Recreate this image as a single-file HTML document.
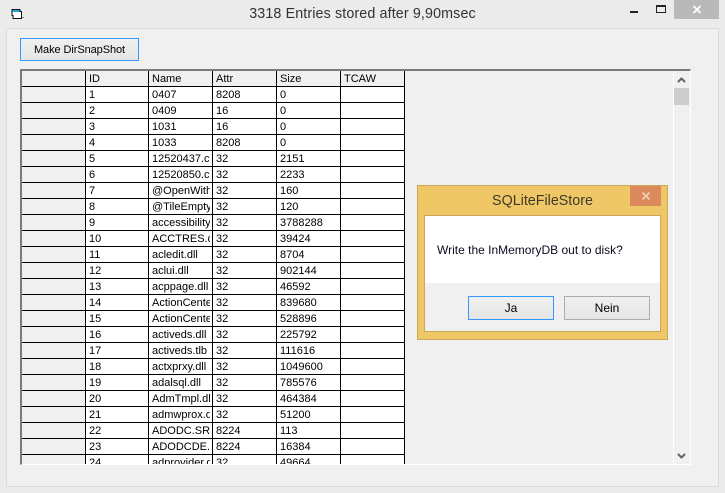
<!DOCTYPE html>
<html><head><meta charset="utf-8"><style>
html,body{margin:0;padding:0}
body{width:725px;height:493px;overflow:hidden;position:relative;background:#ebebeb;font-family:"Liberation Sans",sans-serif;color:#000}
.a{position:absolute;box-sizing:border-box}
table{border-collapse:separate;border-spacing:0;table-layout:fixed;position:absolute;left:22px;top:71px;width:383px;font-size:11px}
td{height:15px;padding:0;border-right:1px solid #000;border-bottom:1px solid #000;overflow:hidden;white-space:nowrap;background:#fff;line-height:15px;box-sizing:content-box}
td div{overflow:hidden;padding-left:3px;margin-right:2px;height:15px;line-height:17px}
td:first-child{background:#f0f0f0}
tr:first-child td{background:#f0f0f0}
.b{background:linear-gradient(#f0f0f0,#e5e5e5);text-align:center;font-size:12px}
</style></head><body>
<div class="a" style="left:6px;top:28px;width:713px;height:459px;background:#f0f0f0;border:1px solid #dcdcdc"></div>
<svg class="a" style="left:10px;top:7px" width="14" height="14" viewBox="0 0 14 14"><path d="M2 2.500h8v2h1.500v7H3v-3H2z" fill="#fff" stroke="#111"/><rect x="2.500" y="3" width="7" height="2" fill="#2ad"/><rect x="12" y="10" width="2" height="1" fill="#888"/></svg>
<div class="a" style="left:200px;top:5px;width:325px;text-align:center;font-size:14.300px;line-height:18px;color:#333;white-space:nowrap;letter-spacing:.12px">3318 Entries stored after 9,90msec</div>
<div class="a" style="left:630px;top:11px;width:8px;height:2px;background:#222"></div>
<div class="a" style="left:656px;top:5px;width:10px;height:8px;border:1px solid #222;border-top-width:2px"></div>
<div class="a" style="left:674px;top:0;width:45px;height:19px;background:#b9b9b9"></div>
<svg class="a" style="left:692px;top:5px" width="10" height="9" viewBox="0 0 10 9"><path d="M1.500 1l7 7M8.500 1l-7 7" stroke="#fff" stroke-width="1.800"/></svg>
<div class="a b" style="left:20px;top:38px;width:119px;height:23px;border:1px solid #3399ff;line-height:22px;font-size:11px;letter-spacing:-.08px">Make DirSnapShot</div>
<div class="a" style="left:20px;top:69px;width:671px;height:396px;background:#f0f0f0;border-top:2px solid #7a7a7a;border-left:2px solid #7a7a7a;border-right:1px solid #fff;border-bottom:1px solid #fff"></div>
<div class="a" style="left:0;top:0;width:725px;height:464px;overflow:hidden">
<table><colgroup><col style="width:64px"><col style="width:63px"><col style="width:64px"><col style="width:64px"><col style="width:64px"><col style="width:64px"></colgroup>
<tr><td></td><td><div>ID</div></td><td><div>Name</div></td><td><div>Attr</div></td><td><div>Size</div></td><td><div>TCAW</div></td></tr>
<tr><td></td><td><div>1</div></td><td><div>0407</div></td><td><div>8208</div></td><td><div>0</div></td><td></td></tr>
<tr><td></td><td><div>2</div></td><td><div>0409</div></td><td><div>16</div></td><td><div>0</div></td><td></td></tr>
<tr><td></td><td><div>3</div></td><td><div>1031</div></td><td><div>16</div></td><td><div>0</div></td><td></td></tr>
<tr><td></td><td><div>4</div></td><td><div>1033</div></td><td><div>8208</div></td><td><div>0</div></td><td></td></tr>
<tr><td></td><td><div>5</div></td><td><div>12520437.cpx</div></td><td><div>32</div></td><td><div>2151</div></td><td></td></tr>
<tr><td></td><td><div>6</div></td><td><div>12520850.cpx</div></td><td><div>32</div></td><td><div>2233</div></td><td></td></tr>
<tr><td></td><td><div>7</div></td><td><div>@OpenWithToast</div></td><td><div>32</div></td><td><div>160</div></td><td></td></tr>
<tr><td></td><td><div>8</div></td><td><div>@TileEmptyTile</div></td><td><div>32</div></td><td><div>120</div></td><td></td></tr>
<tr><td></td><td><div>9</div></td><td><div>accessibilitycpl</div></td><td><div>32</div></td><td><div>3788288</div></td><td></td></tr>
<tr><td></td><td><div>10</div></td><td><div>ACCTRES.dll</div></td><td><div>32</div></td><td><div>39424</div></td><td></td></tr>
<tr><td></td><td><div>11</div></td><td><div>acledit.dll</div></td><td><div>32</div></td><td><div>8704</div></td><td></td></tr>
<tr><td></td><td><div>12</div></td><td><div>aclui.dll</div></td><td><div>32</div></td><td><div>902144</div></td><td></td></tr>
<tr><td></td><td><div>13</div></td><td><div>acppage.dll</div></td><td><div>32</div></td><td><div>46592</div></td><td></td></tr>
<tr><td></td><td><div>14</div></td><td><div>ActionCenter.dll</div></td><td><div>32</div></td><td><div>839680</div></td><td></td></tr>
<tr><td></td><td><div>15</div></td><td><div>ActionCenterCPL</div></td><td><div>32</div></td><td><div>528896</div></td><td></td></tr>
<tr><td></td><td><div>16</div></td><td><div>activeds.dll</div></td><td><div>32</div></td><td><div>225792</div></td><td></td></tr>
<tr><td></td><td><div>17</div></td><td><div>activeds.tlb</div></td><td><div>32</div></td><td><div>111616</div></td><td></td></tr>
<tr><td></td><td><div>18</div></td><td><div>actxprxy.dll</div></td><td><div>32</div></td><td><div>1049600</div></td><td></td></tr>
<tr><td></td><td><div>19</div></td><td><div>adalsql.dll</div></td><td><div>32</div></td><td><div>785576</div></td><td></td></tr>
<tr><td></td><td><div>20</div></td><td><div>AdmTmpl.dll</div></td><td><div>32</div></td><td><div>464384</div></td><td></td></tr>
<tr><td></td><td><div>21</div></td><td><div>admwprox.dll</div></td><td><div>32</div></td><td><div>51200</div></td><td></td></tr>
<tr><td></td><td><div>22</div></td><td><div>ADODC.SRG</div></td><td><div>8224</div></td><td><div>113</div></td><td></td></tr>
<tr><td></td><td><div>23</div></td><td><div>ADODCDE.INI</div></td><td><div>8224</div></td><td><div>16384</div></td><td></td></tr>
<tr><td></td><td><div>24</div></td><td><div>adprovider.dll</div></td><td><div>32</div></td><td><div>49664</div></td><td></td></tr>
</table></div>
<div class="a" style="left:673px;top:71px;width:1px;height:393px;background:#fff"></div>
<div class="a" style="left:674px;top:88px;width:15px;height:17px;background:#cdcdcd"></div>
<svg class="a" style="left:677px;top:76px" width="9" height="8" viewBox="0 0 9 8"><path d="M1 6l3.500-3.500L8 6" fill="none" stroke="#606060" stroke-width="2"/></svg>
<svg class="a" style="left:677px;top:452px" width="9" height="8" viewBox="0 0 9 8"><path d="M1 2l3.500 3.500L8 2" fill="none" stroke="#606060" stroke-width="2"/></svg>
<div class="a" style="left:417px;top:185px;width:251px;height:155px;background:#f0c766;border:1px solid #c9a95a"></div>
<div class="a" style="left:630px;top:186px;width:31px;height:20px;background:#dc8a5c"></div>
<svg class="a" style="left:641px;top:192px" width="10" height="8" viewBox="0 0 10 8"><path d="M1.500 .5l7 7M8.500 .5l-7 7" stroke="#f3d2bd" stroke-width="1.600"/></svg>
<div class="a" style="left:417px;top:192px;width:251px;text-align:center;font-size:14.300px;line-height:18px;color:#3d3a28">SQLiteFileStore</div>
<div class="a" style="left:424px;top:215px;width:237px;height:117px;background:#f0f0f0;border:1px solid #c9a95a"></div>
<div class="a" style="left:425px;top:216px;width:235px;height:67px;background:#fff"></div>
<div class="a" style="left:437px;top:242px;font-size:12px;line-height:16px;color:#0a0a20;white-space:nowrap">Write the InMemoryDB out to disk?</div>
<div class="a b" style="left:468px;top:296px;width:86px;height:24px;border:1px solid #3399ff;line-height:22px">Ja</div>
<div class="a b" style="left:564px;top:296px;width:86px;height:24px;border:1px solid #adadad;line-height:22px">Nein</div>
</body></html>
